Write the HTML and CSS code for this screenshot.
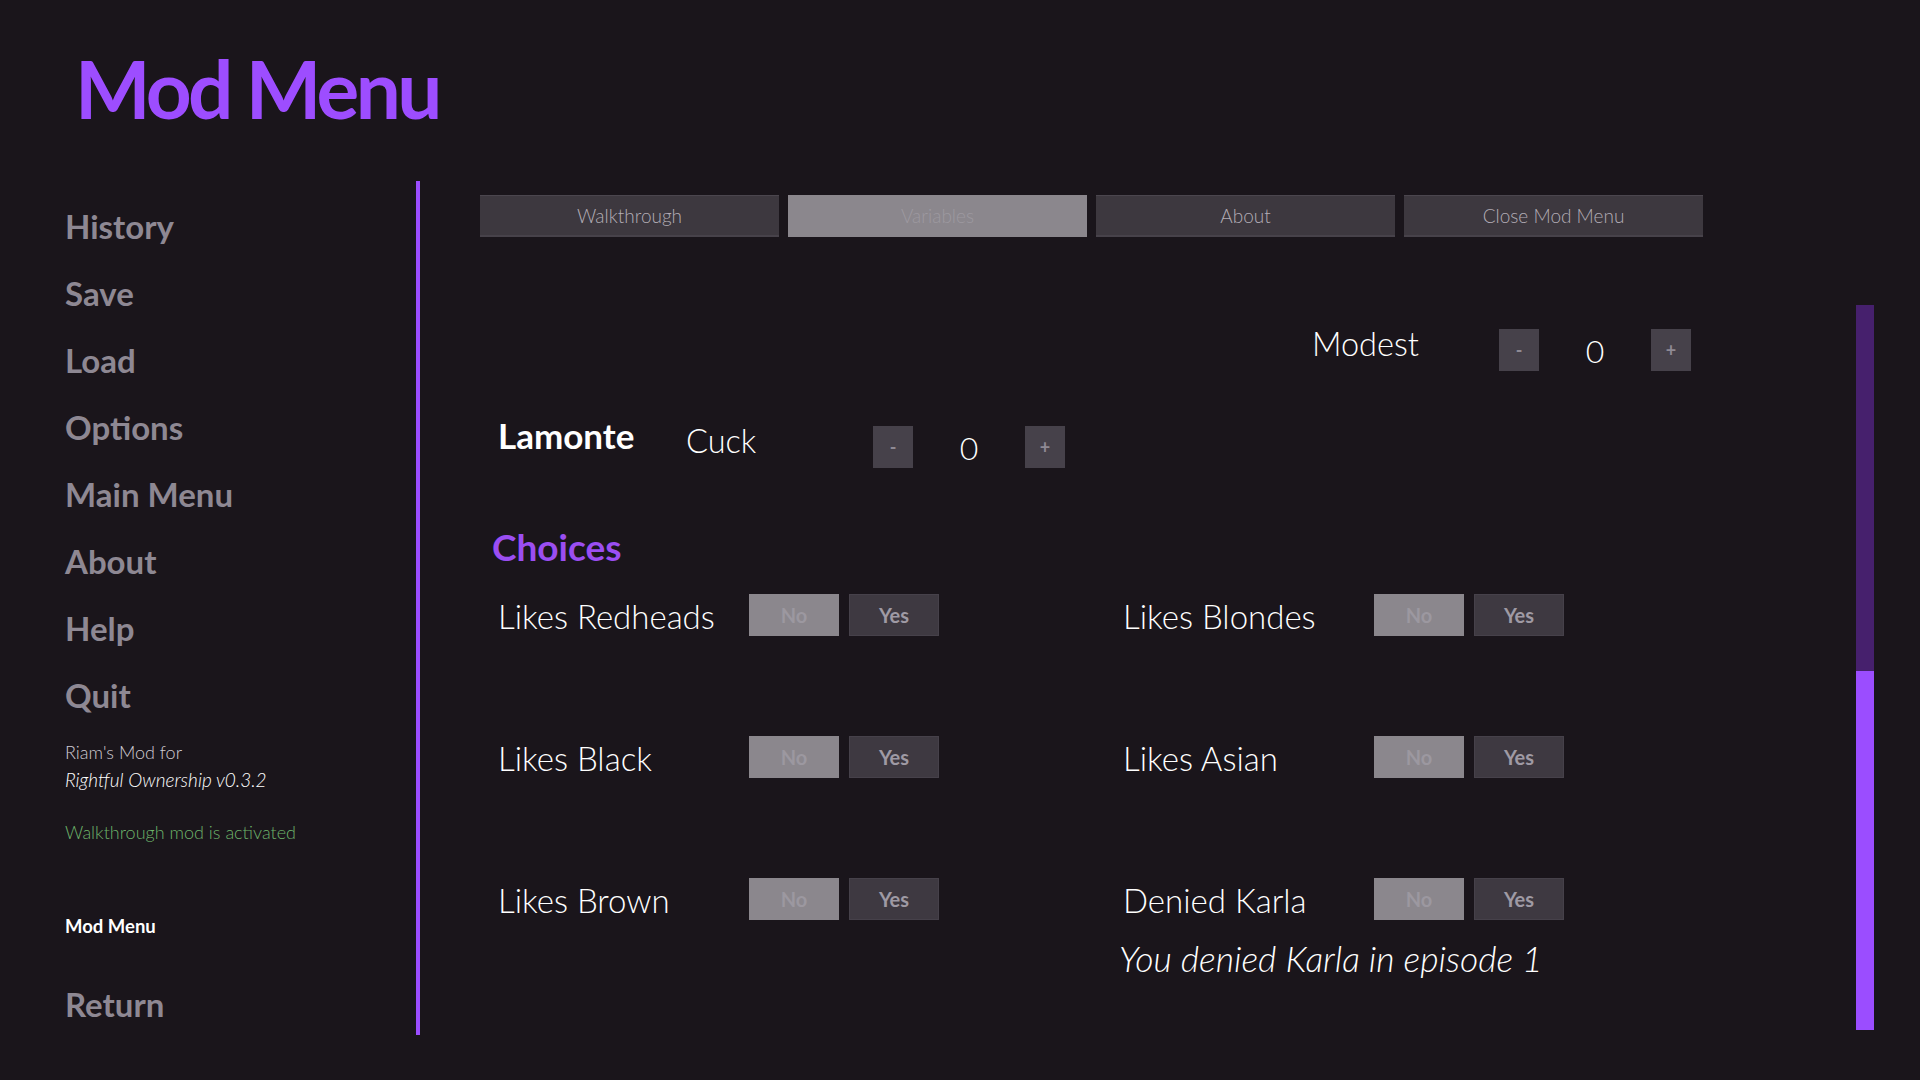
FILE: index.html
```html
<!DOCTYPE html>
<html lang="en">
<head>
<meta charset="utf-8">
<title>Mod Menu</title>
<link rel="stylesheet" href="styles.css">
</head>
<body>
<div class="page">
  <header class="title">Mod Menu</header>
  <div class="main">
    <aside class="sidebar">
      <nav class="nav">
        <a class="nav-item">History</a>
        <a class="nav-item">Save</a>
        <a class="nav-item">Load</a>
        <a class="nav-item">Options</a>
        <a class="nav-item">Main Menu</a>
        <a class="nav-item">About</a>
        <a class="nav-item">Help</a>
        <a class="nav-item">Quit</a>
      </nav>
      <div class="info">
        <div class="info-line">Riam's Mod for</div>
        <div class="info-line info-italic">Rightful Ownership v0.3.2</div>
      </div>
      <div class="status">Walkthrough mod is activated</div>
      <div class="current">Mod Menu</div>
      <a class="return">Return</a>
    </aside>
    <div class="divider"></div>
    <section class="content">
      <div class="tabs">
        <div class="tab">Walkthrough</div>
        <div class="tab tab-active">Variables</div>
        <div class="tab">About</div>
        <div class="tab">Close Mod Menu</div>
      </div>
      <div class="scroll">
        <div class="scroll-body">
          <div class="var-grid">
            <div class="char-name"></div>
            <div class="var-cell"></div>
            <div class="var">
              <span class="var-label">Modest</span>
              <span class="step">-</span>
              <span class="value">0</span>
              <span class="step">+</span>
            </div>
            <div class="char-name">Lamonte</div>
            <div class="var">
              <span class="var-label">Cuck</span>
              <span class="step">-</span>
              <span class="value">0</span>
              <span class="step">+</span>
            </div>
            <div class="var-cell"></div>
          </div>
          <h2 class="section-title">Choices</h2>
          <div class="choice-grid">
            <div class="choice">
              <div class="choice-row">
                <span class="choice-label">Likes Redheads</span>
                <span class="btn btn-no">No</span>
                <span class="btn btn-yes">Yes</span>
              </div>
            </div>
            <div class="choice">
              <div class="choice-row">
                <span class="choice-label">Likes Blondes</span>
                <span class="btn btn-no">No</span>
                <span class="btn btn-yes">Yes</span>
              </div>
            </div>
            <div class="choice">
              <div class="choice-row">
                <span class="choice-label">Likes Black</span>
                <span class="btn btn-no">No</span>
                <span class="btn btn-yes">Yes</span>
              </div>
            </div>
            <div class="choice">
              <div class="choice-row">
                <span class="choice-label">Likes Asian</span>
                <span class="btn btn-no">No</span>
                <span class="btn btn-yes">Yes</span>
              </div>
            </div>
            <div class="choice">
              <div class="choice-row">
                <span class="choice-label">Likes Brown</span>
                <span class="btn btn-no">No</span>
                <span class="btn btn-yes">Yes</span>
              </div>
            </div>
            <div class="choice">
              <div class="choice-row">
                <span class="choice-label">Denied Karla</span>
                <span class="btn btn-no">No</span>
                <span class="btn btn-yes">Yes</span>
              </div>
              <div class="choice-desc">You denied Karla in episode 1</div>
            </div>
          </div>
        </div>
        <div class="scrollbar"><div class="thumb"></div></div>
      </div>
    </section>
  </div>
</div>
</body>
</html>
```

FILE: styles.css
```css
* { box-sizing: border-box; }
html, body { margin: 0; padding: 0; }
body {
  background: #1a151b;
  font-family: "Lato", "Noto Sans", sans-serif;
  color: #ffffff;
  width: 1920px;
  height: 1080px;
  overflow: hidden;
}
.page { display: flex; flex-direction: column; height: 1080px; }

.title {
  margin: 48px 0 53px 0;
  padding-left: 75px;
  font-size: 80px;
  line-height: 80px;
  font-weight: 700;
  letter-spacing: -3.6px;
  color: #9d4dff;
}

.main { display: flex; height: 899px; }

.sidebar {
  flex: 0 0 416px;
  width: 416px;
  padding-left: 65px;
  display: flex;
  flex-direction: column;
}
.nav { display: flex; flex-direction: column; padding-top: 12px; }
.nav-item {
  font-size: 33px;
  line-height: 67px;
  font-weight: 700;
  color: #8e8893;
}
.info { margin-top: 9px; }
.info-line {
  font-size: 18px;
  line-height: 28px;
  font-weight: 300;
  color: #cfcad2;
}
.info-italic { font-size: 19px; font-style: italic; color: #ffffff; }
.status {
  margin-top: 24px;
  font-size: 18px;
  line-height: 28px;
  font-weight: 300;
  color: #6db36a;
}
.current {
  margin-top: 66px;
  font-size: 18.5px;
  line-height: 28px;
  font-weight: 700;
  color: #ffffff;
}
.return {
  margin-top: 44px;
  font-size: 33px;
  line-height: 40px;
  font-weight: 700;
  color: #8e8893;
}

.divider {
  flex: 0 0 4px;
  width: 4px;
  height: 854px;
  background: #9b4dff;
}

.content {
  flex: 1 1 auto;
  min-width: 0;
  padding: 14px 46px 0 60px;
  display: flex;
  flex-direction: column;
}
.tabs { display: flex; gap: 9px; }
.tab {
  flex: 0 0 299px;
  height: 42px;
  background: #3d383f;
  box-shadow: inset 0 1px #4b464e, inset 0 -2px #47424a;
  color: #b3adb6;
  font-size: 19px;
  font-weight: 300;
  line-height: 42px;
  text-align: center;
}
.tab-active { background: #8b878d; box-shadow: none; color: #9d99a0; }

.scroll {
  margin-top: 68px;
  height: 725px;
  display: flex;
}
.scroll-body {
  flex: 1 1 auto;
  min-width: 0;
  padding: 24px 0 0 18px;
}
.scrollbar {
  flex: 0 0 18px;
  background: #46206d;
  display: flex;
  flex-direction: column;
  justify-content: flex-end;
}
.thumb { height: 359px; background: #9b4dff; }

.var-grid {
  display: grid;
  grid-template-columns: 188px 626px 626px;
  grid-auto-rows: 42px;
  row-gap: 55px;
}
.char-name {
  font-size: 35px;
  font-weight: 700;
  line-height: 30px;
  margin-top: -6px;
}
.var { display: flex; align-items: flex-start; }
.var-label {
  flex: 0 0 187px;
  font-size: 32.5px;
  font-weight: 300;
  line-height: 30px;
}
.step {
  flex: 0 0 40px;
  height: 42px;
  background: #46414a;
  color: #8f8a94;
  font-size: 18px;
  font-weight: 700;
  line-height: 42px;
  text-align: center;
}
.value {
  flex: 0 0 112px;
  height: 42px;
  font-size: 32px;
  font-weight: 300;
  line-height: 44px;
  text-align: center;
}

.section-title {
  margin: 58px 0 0 -6px;
  font-size: 37px;
  line-height: 42px;
  font-weight: 700;
  color: #9b4ef2;
}

.choice-grid {
  margin-top: 26px;
  display: grid;
  grid-template-columns: 625px 625px;
  row-gap: 100px;
}
.choice-row { display: flex; align-items: flex-start; height: 42px; }
.choice-label {
  flex: 0 0 251px;
  font-size: 33px;
  font-weight: 300;
  line-height: 44px;
}
.btn {
  flex: 0 0 90px;
  height: 42px;
  font-size: 20px;
  font-weight: 700;
  line-height: 42px;
  text-align: center;
}
.btn-no { background: #8b878d; color: #9c98a0; }
.btn-yes {
  margin-left: 10px;
  background: #3e3941;
  box-shadow: inset 0 0 0 1px #46414a;
  color: #9f9aa4;
}
.choice-desc {
  margin: 19px 0 0 -4px;
  font-size: 35.5px;
  font-style: italic;
  font-weight: 300;
  line-height: 40px;
  white-space: nowrap;
}
```
